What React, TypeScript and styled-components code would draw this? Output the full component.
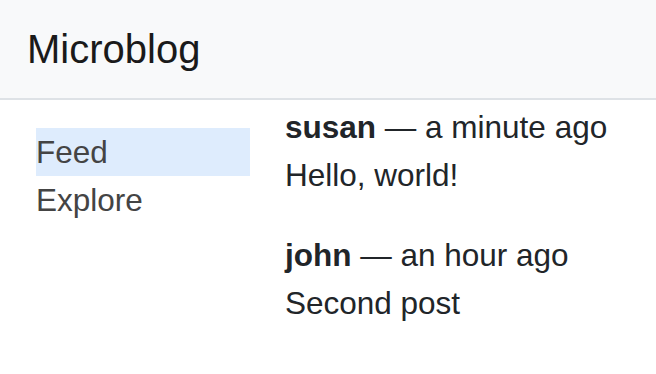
import React from 'react';
import styled, { createGlobalStyle } from 'styled-components';

const GlobalStyle = createGlobalStyle`
  html, body {
    margin: 0;
    padding: 0;
    background: #fff;
    font-family: "Liberation Sans", Arial, sans-serif;
    color: #212529;
  }
`;

const Header = styled.header`
  height: 100px;
  background-color: #f8f9fa;
  border-bottom: 2px solid #dee2e6;
  display: flex;
  align-items: center;
  padding: 0 27px;
  box-sizing: border-box;
`;

const Brand = styled.h1`
  margin: 0;
  font-size: 40px;
  font-weight: 400;
  color: #1a1a1a;
`;

const Body = styled.div`
  display: flex;
`;

const Sidebar = styled.nav`
  width: 214px;
  margin-left: 36px;
  padding-top: 28px;
  display: flex;
  flex-direction: column;
`;

const NavItem = styled.a<{ $active?: boolean }>`
  display: block;
  height: 48px;
  line-height: 48px;
  font-size: 31.5px;
  color: #444;
  text-decoration: none;
  background-color: ${(p) => (p.$active ? '#deecfd' : 'transparent')};
`;

const Feed = styled.main`
  margin-left: 35px;
  padding-top: 3px;
  display: flex;
  flex-direction: column;
  gap: 32px;
`;

const Post = styled.div`
  font-size: 31.5px;
  line-height: 48px;
  color: #212529;
`;

const Meta = styled.div``;

const Author = styled.strong`
  font-weight: 700;
`;

const posts = [
  { author: 'susan', time: 'a minute ago', text: 'Hello, world!' },
  { author: 'john', time: 'an hour ago', text: 'Second post' },
];

const App: React.FC = () => {
  return (
    <>
      <GlobalStyle />
      <Header>
        <Brand>Microblog</Brand>
      </Header>
      <Body>
        <Sidebar>
          <NavItem $active>Feed</NavItem>
          <NavItem>Explore</NavItem>
        </Sidebar>
        <Feed>
          {posts.map((p) => (
            <Post key={p.author}>
              <Meta>
                <Author>{p.author}</Author> — {p.time}
              </Meta>
              <div>{p.text}</div>
            </Post>
          ))}
        </Feed>
      </Body>
    </>
  );
};

export default App;
